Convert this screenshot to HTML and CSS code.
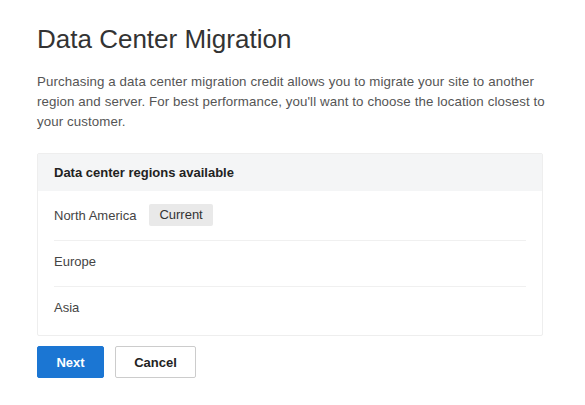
FILE: index.html
```html
<!DOCTYPE html>
<html>
<head>
<meta charset="utf-8">
<link rel="stylesheet" href="styles.css">
</head>
<body>
<main class="page">
  <h1 class="title">Data Center Migration</h1>
  <p class="intro">Purchasing a data center migration credit allows you to migrate your site to another region and server. For best performance, you'll want to choose the location closest to your customer.</p>
  <section class="card">
    <div class="card-head">Data center regions available</div>
    <ul class="regions">
      <li class="region">North America <span class="badge">Current</span></li>
      <li class="region">Europe</li>
      <li class="region">Asia</li>
    </ul>
  </section>
  <div class="actions">
    <button class="btn btn-primary">Next</button>
    <button class="btn btn-secondary">Cancel</button>
  </div>
</main>
</body>
</html>
```

FILE: styles.css
```css
* { box-sizing: border-box; }
html, body { margin: 0; padding: 0; background: #ffffff; }
body {
  font-family: "Liberation Sans", Arial, sans-serif;
  color: #333;
}
.page {
  padding: 24px 42px 0 37px;
}
.title {
  margin: 0;
  font-size: 26px;
  font-weight: normal;
  color: #333;
  line-height: 30px;
}
.intro {
  margin: 18px -20px 0 0;
  font-size: 13.3px;
  letter-spacing: 0.1px;
  line-height: 20px;
  color: #555;
  max-width: 515px;
}
.card {
  margin-top: 21px;
  border: 1px solid #eeeeee;
  border-radius: 2px;
}
.card-head {
  background: #f4f5f6;
  height: 37px;
  display: flex;
  align-items: center;
  padding-left: 16px;
  font-size: 13px;
  font-weight: bold;
  color: #222;
}
.regions {
  list-style: none;
  margin: 0;
  padding: 4px 16px 2px;
}
.region {
  height: 46px;
  display: flex;
  align-items: center;
  padding-bottom: 5px;
  font-size: 13px;
  color: #444;
  border-bottom: 1px solid #f0f0f0;
}
.region:last-child { border-bottom: none; }
.badge {
  margin-left: 13px;
  background: #e9e9e9;
  color: #333;
  padding: 0 10px;
  height: 22px;
  line-height: 22px;
  border-radius: 2px;
}
.actions {
  display: flex;
  gap: 11px;
  margin-top: 10px;
}
.btn {
  height: 32px;
  font-family: "Liberation Sans", Arial, sans-serif;
  font-size: 13px;
  font-weight: bold;
  border-radius: 2px;
  cursor: pointer;
}
.btn-primary {
  width: 67px;
  background: #1b76d3;
  color: #fff;
  border: 1px solid #1b76d3;
}
.btn-secondary {
  width: 81px;
  background: #fff;
  color: #222;
  border: 1px solid #cccccc;
}
```
